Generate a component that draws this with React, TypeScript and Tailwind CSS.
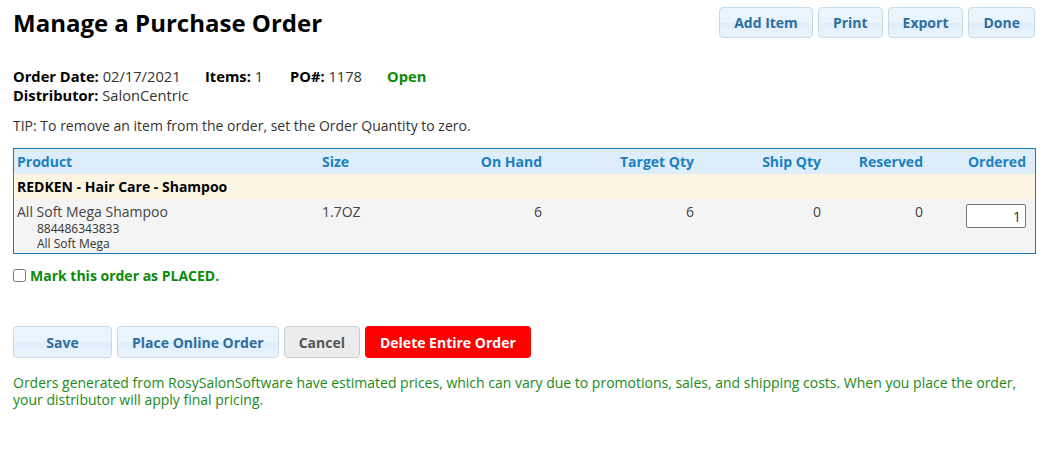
import { useState } from 'react';

const topButtons = ['Add Item', 'Print', 'Export', 'Done'];

const columns = [
  { label: 'Product', align: 'text-left pl-[3px]' },
  { label: 'Size', align: 'text-left pl-[4px]' },
  { label: 'On Hand', align: 'text-right pr-[4px]' },
  { label: 'Target Qty', align: 'text-right pr-[4px]' },
  { label: 'Ship Qty', align: 'text-right pr-[4px]' },
  { label: 'Reserved', align: 'text-right pr-[4px]' },
  { label: 'Ordered', align: 'text-right pr-[9px]' },
];

const gridCols = 'grid grid-cols-[304px_122px_106px_152px_127px_102px_1fr]';

function BlueButton({ children, className = '' }: { children: React.ReactNode; className?: string }) {
  return (
    <button
      className={`rounded-[4px] border border-[#c5dbec] bg-[linear-gradient(#eaf4fd_0%,#eaf4fd_50%,#dfeefc_52%,#eaf4fd_100%)] px-[14px] text-[14px] font-bold text-[#2e6e9e] ${className}`}
    >
      {children}
    </button>
  );
}

export default function App() {
  const [qty, setQty] = useState('1');
  const [placed, setPlaced] = useState(false);

  return (
    <div className="min-h-[450px] bg-white pl-[13px] pr-[26px] text-[14px] text-[#333] font-['Open_Sans',sans-serif]">
      {/* Header */}
      <div className="flex items-start justify-between pt-[7px]">
        <h1 className="pt-[1px] text-[24px] leading-[30px] font-bold text-black">Manage a Purchase Order</h1>
        <div className="flex gap-[5px] pr-[1px]">
          {topButtons.map((b) => (
            <BlueButton key={b} className="h-[31px]">
              {b}
            </BlueButton>
          ))}
        </div>
      </div>

      {/* Order info */}
      <div className="mt-[29px] text-[14.7px] leading-[19px]">
        <div className="flex">
          <span className="w-[192px]">
            <b className="text-black">Order Date:</b> 02/17/2021
          </span>
          <span className="w-[85px]">
            <b className="text-black">Items:</b> 1
          </span>
          <span className="w-[97px]">
            <b className="text-black">PO#:</b> 1178
          </span>
          <span className="font-bold text-[#0a8a0a]">Open</span>
        </div>
        <div>
          <b className="text-black">Distributor:</b> SalonCentric
        </div>
      </div>

      <p className="mt-[11px] leading-[19px]">TIP: To remove an item from the order, set the Order Quantity to zero.</p>

      {/* Table */}
      <div className="mt-[13px] border border-[#1a7cb4]">
        <div className={`${gridCols} h-[25px] items-center bg-[#ddedfa] font-bold text-[#1a80c0]`}>
          {columns.map((c) => (
            <div key={c.label} className={c.align}>
              {c.label}
            </div>
          ))}
        </div>
        <div className="flex h-[25px] items-center bg-[#fcf5e2] pl-[3px] font-bold text-black">
          REDKEN - Hair Care - Shampoo
        </div>
        <div className={`${gridCols} h-[54px] bg-[#f4f4f4] pt-[3px] text-[#444]`}>
          <div className="pl-[3px]">
            <div className="leading-[19px]">All Soft Mega Shampoo</div>
            <div className="pl-[20px] text-[12px] leading-[15px] text-[#333]">884486343833</div>
            <div className="pl-[20px] text-[12px] leading-[15px] text-[#333]">All Soft Mega</div>
          </div>
          <div className="pl-[4px] leading-[19px]">1.7OZ</div>
          <div className="pr-[4px] text-right leading-[19px]">6</div>
          <div className="pr-[4px] text-right leading-[19px]">6</div>
          <div className="pr-[4px] text-right leading-[19px]">0</div>
          <div className="pr-[4px] text-right leading-[19px]">0</div>
          <div className="flex justify-end pr-[9px] pt-[2px]">
            <input
              value={qty}
              onChange={(e) => setQty(e.target.value)}
              className="h-[24px] w-[60px] rounded-[2px] border border-[#767676] bg-white px-[4px] text-right text-[14px] text-[#333] outline-none"
            />
          </div>
        </div>
      </div>

      {/* Placed checkbox */}
      <label className="mt-[12px] flex items-center gap-[4px] leading-[19px]">
        <input
          type="checkbox"
          checked={placed}
          onChange={(e) => setPlaced(e.target.checked)}
          className="m-0 h-[13px] w-[13px]"
        />
        <span className="font-bold text-[#0a8a0a]">Mark this order as PLACED.</span>
      </label>

      {/* Actions */}
      <div className="mt-[41px] flex gap-[5px]">
        <BlueButton className="h-[32px] w-[99px]">Save</BlueButton>
        <BlueButton className="h-[32px]">Place Online Order</BlueButton>
        <button className="h-[32px] rounded-[4px] border border-[#cccccc] bg-[#ececec] px-[14px] text-[14px] font-bold text-[#555]">
          Cancel
        </button>
        <button className="h-[32px] rounded-[4px] bg-[#ff0000] px-[15px] text-[14px] font-bold text-white">
          Delete Entire Order
        </button>
      </div>

      <p className="mt-[16px] pr-[8px] leading-[17px] text-[#1a8a1a]">
        Orders generated from RosySalonSoftware have estimated prices, which can vary due to promotions, sales, and
        shipping costs. When you place the order, your distributor will apply final pricing.
      </p>
    </div>
  );
}
